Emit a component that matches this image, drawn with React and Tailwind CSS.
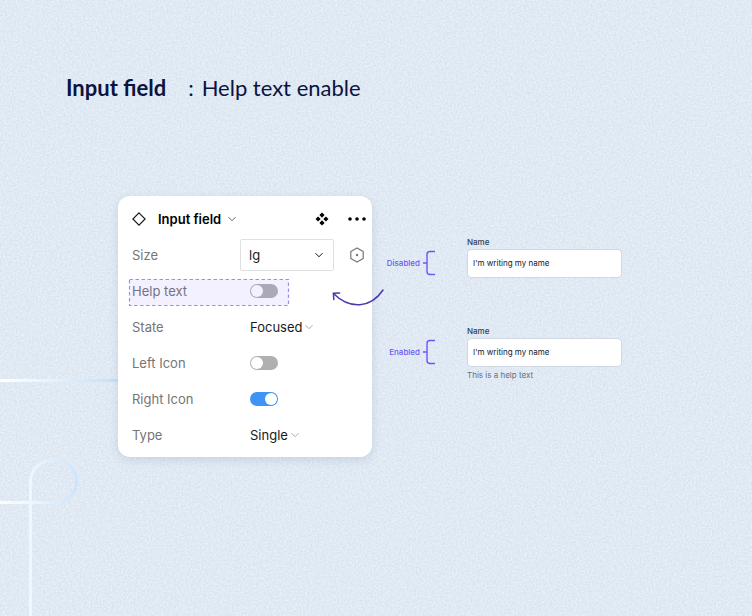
import React, { useState } from 'react';

const Chevron = ({ className }) => (
  <svg viewBox="0 0 10 10" fill="none" stroke="currentColor" className={className} aria-hidden="true">
    <path d="M1.5 3.2 5 6.7l3.5-3.5" />
  </svg>
);

const Backdrop = () => (
  <svg className="absolute inset-0 -z-10 h-full w-full" aria-hidden="true">
    <defs>
      <filter id="grain" x="0" y="0" width="100%" height="100%" colorInterpolationFilters="sRGB">
        <feTurbulence type="fractalNoise" baseFrequency="0.55" numOctaves="2" seed="4" />
        <feColorMatrix values="0.12 0 0 0 0.82  0.1 0 0 0 0.866  0.06 0 0 0 0.924  0 0 0 0 1" />
      </filter>
      <linearGradient id="beam" gradientUnits="userSpaceOnUse" x1="0" y1="0" x2="120" y2="0">
        <stop offset="0" stopColor="#ffffff" />
        <stop offset="0.5" stopColor="#e0f0fe" />
        <stop offset="1" stopColor="#bfdffc" />
      </linearGradient>
      <linearGradient id="loop" gradientUnits="userSpaceOnUse" x1="0" y1="0" x2="78" y2="0">
        <stop offset="0" stopColor="#fbfdff" />
        <stop offset="0.4" stopColor="#eef6fe" />
        <stop offset="1" stopColor="#cbe5fd" />
      </linearGradient>
    </defs>
    <rect width="100%" height="100%" filter="url(#grain)" />
    <rect y="379" width="140" height="3" fill="url(#beam)" />
    <path
      d="M0 502.5H56a20.5 21.2 0 0 0 0-42.5h-3.500A22 22 0 0 0 30.500 482V2000"
      fill="none"
      stroke="url(#loop)"
      strokeWidth="3"
    />
  </svg>
);

const Row = ({ label, htmlFor, children }) => (
  <div className="grid h-9 grid-cols-[minmax(0,118fr)_minmax(0,108fr)] items-center">
    <label htmlFor={htmlFor} className="text-[13px] leading-5 text-[#757575]">
      {label}
    </label>
    <div className="flex items-center">{children}</div>
  </div>
);

const Toggle = ({ id, checked, onChange }) => (
  <input
    id={id}
    type="checkbox"
    role="switch"
    checked={checked}
    onChange={onChange}
    className="flex h-3.5 w-7 appearance-none items-center rounded-full bg-[#b0b0b0] p-px before:h-3 before:w-3 before:rounded-full before:bg-white checked:justify-end checked:bg-[#3f93f6]"
  />
);

const InlineSelect = ({ id, options }) => (
  <>
    <select id={id} className="field-sizing-content appearance-none bg-transparent text-[13px] leading-5 text-[#1a1a1a]">
      {options.map((option) => (
        <option key={option}>{option}</option>
      ))}
    </select>
    <Chevron className="ml-0.5 h-2.5 w-2.5 text-[#a8a8a8]" />
  </>
);

const PropertiesPanel = () => {
  const [values, setValues] = useState({ help: false, left: false, right: true });
  const toggle = (key) => () => setValues((prev) => ({ ...prev, [key]: !prev[key] }));

  return (
    <section className="relative rounded-xl bg-white pt-[5px] pr-3.5 pb-1 pl-3.5 shadow-[0_3px_10px_rgba(100,130,165,0.22)]">
      <header className="flex h-9 items-center">
        <svg viewBox="0 0 14 14" className="h-3.5 w-3.5" fill="none" stroke="#1a1a1a" strokeWidth="1.200" aria-hidden="true">
          <path d="M7 .9 13.100 7 7 13.100.9 7Z" />
        </svg>
        <h2 className="ml-3 text-[13px] leading-5 font-semibold text-black">Input field</h2>
        <Chevron className="ml-1.5 h-2.5 w-2.5 text-[#666666]" />
        <button type="button" aria-label="Go to main component" className="ml-auto">
          <svg viewBox="0 0 12 12" className="h-3 w-3 overflow-visible" fill="#000">
            <path d="m6-.5 2.600 2.600L6 4.700 3.400 2.100ZM6 7.300l2.600 2.600L6 12.500 3.400 9.900ZM2.100 3.400 4.700 6 2.100 8.600-.5 6ZM9.900 3.400 12.500 6 9.900 8.600 7.300 6Z" />
          </svg>
        </button>
        <button type="button" aria-label="More options" className="-mr-2 ml-5">
          <svg viewBox="0 0 18 4" className="h-1 w-[18px]" fill="#000">
            <circle cx="2" cy="2" r="1.800" />
            <circle cx="9" cy="2" r="1.800" />
            <circle cx="16" cy="2" r="1.800" />
          </svg>
        </button>
      </header>

      <div className="flex h-9 items-center">
        <label htmlFor="size" className="flex-1 text-[13px] leading-5 text-[#757575]">
          Size
        </label>
        <div className="relative w-[94px]">
          <select id="size" className="h-8 w-full appearance-none rounded-xs border border-[#e0e0e0] bg-white px-2 text-[13px] leading-5 text-[#1a1a1a]">
            <option>lg</option>
            <option>md</option>
            <option>sm</option>
          </select>
          <Chevron className="pointer-events-none absolute top-[11px] right-2.5 h-2.5 w-2.5 text-[#1a1a1a]" />
        </div>
        <button type="button" aria-label="Apply variable" className="-mr-1.5 ml-4">
          <svg viewBox="0 0 14 16" className="h-4 w-3.5" fill="none" stroke="#757575" strokeWidth="1.200">
            <path d="M7 .9 13.200 4.400v7.200L7 15.100.8 11.600V4.400Z" strokeLinejoin="round" />
            <circle cx="7" cy="8" r="1.200" fill="#757575" stroke="none" />
          </svg>
        </button>
      </div>

      <div className="relative">
        <Row label="Help text" htmlFor="help">
          <Toggle id="help" checked={values.help} onChange={toggle('help')} />
        </Row>
        <svg className="pointer-events-none absolute top-1.5 -left-[3px] h-[27px] w-[161px] overflow-visible" aria-hidden="true">
          <rect x="0.500" y="0.500" width="159" height="26" fill="#7c5cfc" fillOpacity="0.090" stroke="#a08cf2" strokeDasharray="3.500 2.500" strokeWidth="1.200" />
        </svg>
      </div>
      <Row label="State" htmlFor="state">
        <InlineSelect id="state" options={['Focused', 'Default', 'Disabled']} />
      </Row>
      <Row label="Left Icon" htmlFor="left-icon">
        <Toggle id="left-icon" checked={values.left} onChange={toggle('left')} />
      </Row>
      <Row label="Right Icon" htmlFor="right-icon">
        <Toggle id="right-icon" checked={values.right} onChange={toggle('right')} />
      </Row>
      <Row label="Type" htmlFor="type">
        <InlineSelect id="type" options={['Single', 'Multiple']} />
      </Row>

      <svg viewBox="0 0 54 20" className="absolute top-[92px] -right-3 h-5 w-[54px]" fill="none" stroke="#4a3aac" strokeWidth="1.500" strokeLinecap="round" aria-hidden="true">
        <path d="M53 2C41 20 20 22 3.500 5.500M3.800 11.500 3.400 5.300 9.600 5" />
      </svg>
    </section>
  );
};

const Example = ({ state, id, help }) => (
  <div className="flex">
    <div className="mt-3 flex h-[29px] w-12 items-center justify-end">
      <span className="text-[8px] leading-3 font-medium text-[#6e56f8]">{state}</span>
      <svg viewBox="0 0 13 26" className="ml-[3px] h-[26px] w-[13px] shrink-0" fill="none" stroke="#6e56f8" strokeWidth="1.400" aria-hidden="true">
        <path d="M0 13H4M12 1.500H7A3 3 0 0 0 4 4.500V21.500A3 3 0 0 0 7 24.500H12" />
      </svg>
    </div>
    <div className="ml-[31px] flex flex-1 flex-col">
      <label htmlFor={id} className="text-[8px] leading-3 font-medium text-[#344054]">
        Name
      </label>
      <input
        id={id}
        type="text"
        defaultValue="I'm writing my name"
        className="mt-px h-[29px] w-full rounded-sm border border-[#d0d8e4] bg-white px-[5px] pb-px text-[8px] leading-3 text-[#101828]"
      />
      {help && <p className="mt-0.5 text-[8px] leading-3 text-[#667085]">{help}</p>}
    </div>
  </div>
);

export default function App() {
  return (
    <main className="relative isolate min-h-screen font-['Inter',sans-serif]">
      <Backdrop />
      <h1 className="flex pt-[72px] pl-[66px] font-['Lato',sans-serif] text-[22px] leading-8 font-normal text-[#0b1340]">
        <strong className="font-bold">Input field</strong>
        <span className="ml-[22px]">:</span>
        <span className="ml-2">Help text enable</span>
      </h1>
      <div className="grid grid-cols-[minmax(0,254fr)_minmax(0,234fr)] items-start gap-4 pt-[92px] pr-[130px] pb-20 pl-[118px]">
        <PropertiesPanel />
        <div className="flex flex-col gap-[47px] pt-10">
          <Example state="Disabled" id="name-disabled" />
          <Example state="Enabled" id="name-enabled" help="This is a help text" />
        </div>
      </div>
    </main>
  );
}
